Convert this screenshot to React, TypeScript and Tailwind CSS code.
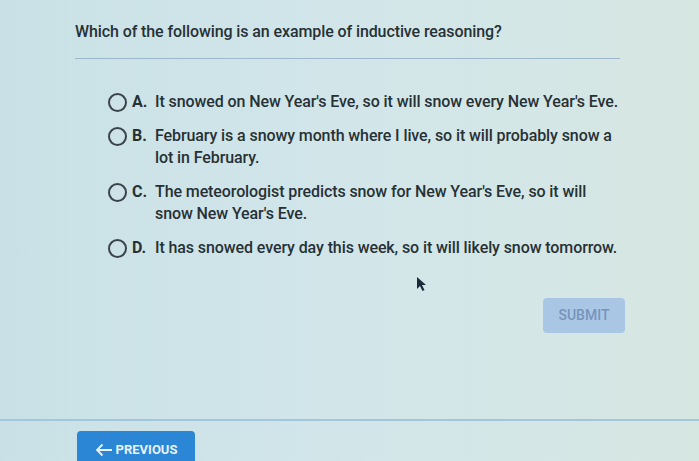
import type { FC } from 'react';

const options = [
  { letter: 'A.', text: "It snowed on New Year's Eve, so it will snow every New Year's Eve." },
  { letter: 'B.', text: 'February is a snowy month where I live, so it will probably snow a lot in February.' },
  { letter: 'C.', text: "The meteorologist predicts snow for New Year's Eve, so it will snow New Year's Eve." },
  { letter: 'D.', text: 'It has snowed every day this week, so it will likely snow tomorrow.' },
];

const Radio: FC = () => (
  <span className="mt-[2px] h-[19px] w-[19px] shrink-0 rounded-full border-[2px] border-[#3a4347]" />
);

const App: FC = () => {
  return (
    <div
      className="relative h-[461px] w-[699px] overflow-hidden bg-gradient-to-r from-[#c9e1e6] via-[#d2e6ea] to-[#d6e7e2] text-[#273135]"
      style={{ fontFamily: 'Roboto, "Liberation Sans", sans-serif' }}
    >
      <div className="pl-[75px] pr-[40px] pt-[20px]">
        <h1 className="text-[16px] font-medium leading-[24px] tracking-[-0.1px]">
          Which of the following is an example of inductive reasoning?
        </h1>
        <div className="mt-[14px] h-px w-[545px] bg-[#9db7cc]" />

        <ul className="mt-[32px] flex flex-col gap-[12px] pl-[33px]">
          {options.map((o) => (
            <li key={o.letter} className="flex">
              <Radio />
              <span className="ml-[5px] w-[21px] shrink-0 text-[16px] font-bold leading-[22px]">{o.letter}</span>
              <span className="ml-[2px] w-[470px] text-[16px] font-medium leading-[22px] tracking-[-0.1px]">{o.text}</span>
            </li>
          ))}
        </ul>

        <div className="mt-[39px] flex w-[550px] justify-end">
          <button
            type="button"
            className="h-[35px] w-[82px] rounded-[4px] bg-[#a9c7e5] text-[14px] font-medium text-[#7794bb]"
          >
            SUBMIT
          </button>
        </div>
      </div>

      <div className="mt-[86px] h-[2px] bg-[#a3c6dc]" />

      <div className="pl-[77px] pt-[10px]">
        <button
          type="button"
          className="flex h-[36px] w-[118px] items-center justify-center gap-[3px] rounded-t-[4px] bg-[#2b86d5] pt-[2px] text-[13px] font-bold text-[#e8f2fb]"
        >
          <svg width="18" height="14" viewBox="0 0 18 14" fill="none" stroke="currentColor" strokeWidth="1.8">
            <path d="M17 7H2M7.5 1.5L2 7l5.5 5.5" />
          </svg>
          PREVIOUS
        </button>
      </div>

      {/* mouse cursor */}
      <svg className="absolute left-[416px] top-[276px]" width="12" height="16" viewBox="0 0 12 16">
        <path d="M1 1v12l3-3 2.5 5 2-1-2.5-5H10z" fill="#1d2a3a" />
      </svg>
    </div>
  );
};

export default App;
